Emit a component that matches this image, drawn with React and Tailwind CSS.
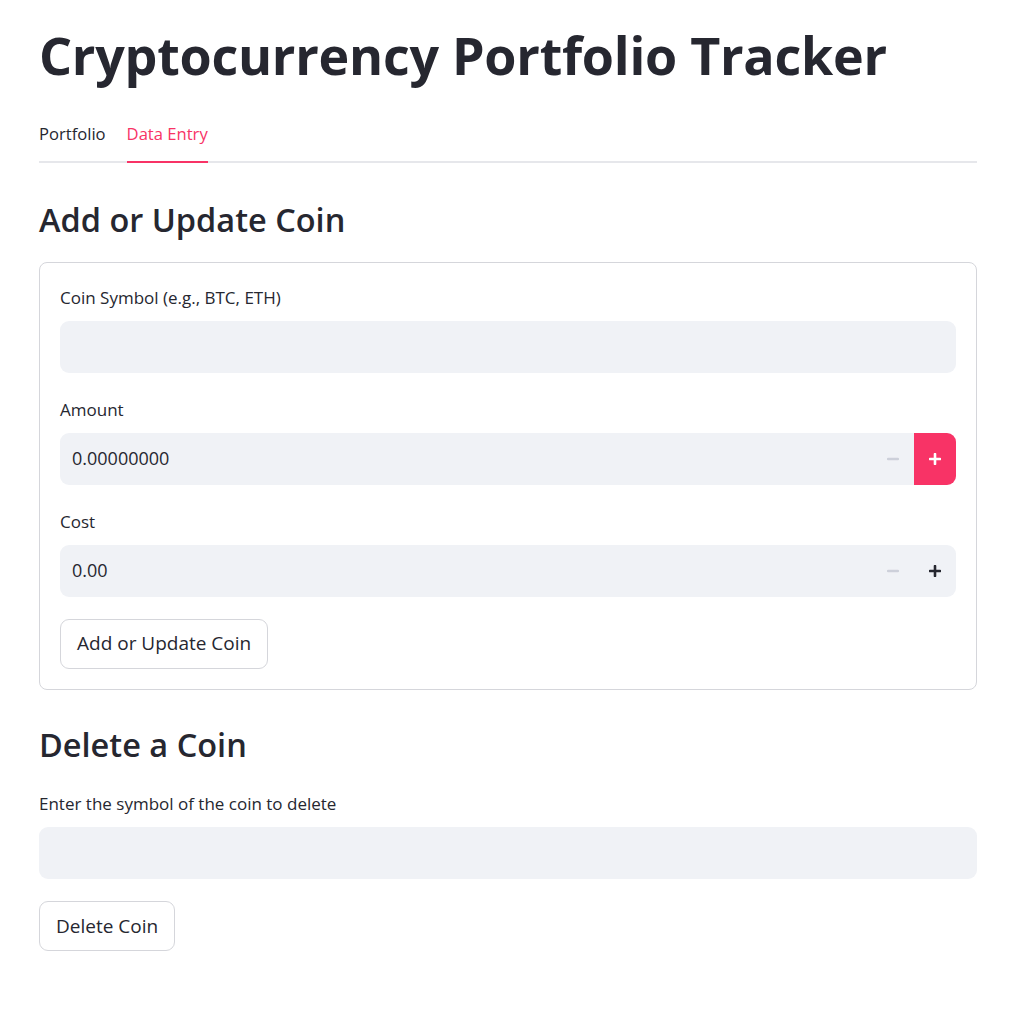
import React, { useState } from 'react';

const Minus = () => (
    <svg width="12" height="12" viewBox="0 0 12 12">
        <path d="M1 6h10" stroke="#cdd0da" strokeWidth="2.4" strokeLinecap="round" />
    </svg>
);

const Plus = ({ color }) => (
    <svg width="12" height="12" viewBox="0 0 12 12">
        <path d="M1 6h10M6 1v10" stroke={color} strokeWidth="2.6" strokeLinecap="round" />
    </svg>
);

const TextInput = () => (
    <div className="h-[52px] w-full rounded-[9px] bg-[#f0f2f6]"></div>
);

const NumberInput = ({ value, active }) => (
    <div className="flex h-[52px] w-full items-stretch overflow-hidden rounded-[9px] bg-[#f0f2f6]">
        <div className="flex flex-1 items-center pl-[12px] text-[18px] text-[#262730]">{value}</div>
        <div className="flex w-[42px] items-center justify-center">
            <Minus />
        </div>
        <div className={`flex w-[42px] items-center justify-center ${active ? 'bg-[#f83366]' : ''}`}>
            <Plus color={active ? '#ffffff' : '#262730'} />
        </div>
    </div>
);

const Label = ({ children, className = '' }) => (
    <div className={`text-[17px] leading-[24px] text-[#262730] ${className}`}>{children}</div>
);

const Button = ({ children }) => (
    <button className="h-[50px] rounded-[9px] border border-[#d5d6db] bg-white px-[16px] text-[19px] text-[#262730]">
        {children}
    </button>
);

const App = () => {
    const [tab, setTab] = useState('entry');

    return (
        <div className="min-h-screen bg-white px-[39px] pt-[29px] pb-[40px] text-[#262730]" style={{ fontFamily: '"Open Sans", "Noto Sans", sans-serif' }}>
            <h1 className="text-[52px] font-bold leading-none tracking-[-0.005em]">Cryptocurrency Portfolio Tracker</h1>

            <div className="mt-[39px] flex gap-[21px] border-b-2 border-[#e6e7eb]">
                <button
                    className={`-mb-[2px] border-b-2 pb-[13px] text-[16.6px] leading-[28px] ${tab === 'portfolio' ? 'border-[#f83366] text-[#f83366]' : 'border-transparent text-[#262730]'}`}
                    onClick={() => setTab('portfolio')}
                >
                    Portfolio
                </button>
                <button
                    className={`-mb-[2px] border-b-2 pb-[13px] text-[16.6px] leading-[28px] ${tab === 'entry' ? 'border-[#f83366] text-[#f83366]' : 'border-transparent text-[#262730]'}`}
                    onClick={() => setTab('entry')}
                >
                    Data Entry
                </button>
            </div>

            <h2 className="mt-[41px] text-[32.5px] font-semibold leading-none">Add or Update Coin</h2>

            <div className="mt-[25px] rounded-[8px] border border-[#d5d6db] px-[20px] pt-[23px] pb-[20px]">
                <Label>Coin Symbol (e.g., BTC, ETH)</Label>
                <div className="mt-[11px]">
                    <TextInput />
                </div>

                <Label className="mt-[25px]">Amount</Label>
                <div className="mt-[11px]">
                    <NumberInput value="0.00000000" active />
                </div>

                <Label className="mt-[25px]">Cost</Label>
                <div className="mt-[11px]">
                    <NumberInput value="0.00" />
                </div>

                <div className="mt-[22px]">
                    <Button>Add or Update Coin</Button>
                </div>
            </div>

            <h2 className="mt-[39px] text-[32.5px] font-semibold leading-none">Delete a Coin</h2>

            <Label className="mt-[31px]">Enter the symbol of the coin to delete</Label>
            <div className="mt-[11px]">
                <TextInput />
            </div>

            <div className="mt-[22px]">
                <Button>Delete Coin</Button>
            </div>
        </div>
    );
};

export default App;
